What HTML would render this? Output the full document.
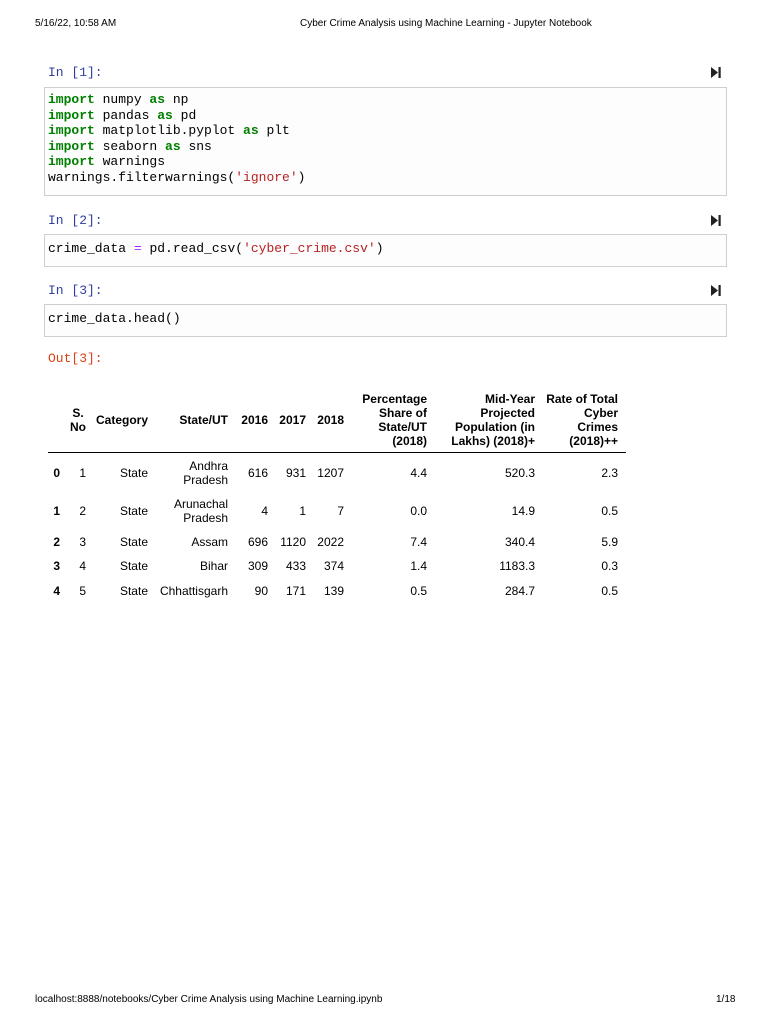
<!DOCTYPE html>
<html><head><meta charset="utf-8"><style>
body{margin:0;width:768px;height:1024px;background:#fff;position:relative;overflow:hidden;font-family:"Liberation Sans",Arial,sans-serif;color:#000}
.a{position:absolute;white-space:nowrap}
.hd{font-size:10px;top:18px}
.m{font-family:"Liberation Mono",monospace;font-size:13px;line-height:15.6px}
.pr{color:#303f9f}
.po{color:#d84315}
.k{color:#008000;font-weight:bold}
.s{color:#ba2121}
.o{color:#aa22ff}
.box{position:absolute;left:44px;width:681px;border:1px solid #cfcfcf;background:#fdfdfd}
.run{position:absolute;left:711px;width:10px;height:11px}
.t{position:absolute;white-space:nowrap;text-align:right;font-size:12px;line-height:14px;color:#000}
.b{font-weight:bold}
</style></head><body>
<div class="a hd" style="left:35px">5/16/22, 10:58 AM</div>
<div class="a hd" style="left:300px">Cyber Crime Analysis using Machine Learning - Jupyter Notebook</div>

<div class="a m pr" style="left:48px;top:65px">In [1]:</div>
<svg class="run" style="top:67px" viewBox="0 0 10 11"><path d="M0 0 L7 5.5 L0 11Z" fill="#222"/><rect x="7.5" y="0" width="2.2" height="11" fill="#222"/></svg>
<div class="box" style="top:87px;height:107px"></div>
<div class="a m" style="left:48px;top:92px">
<span class="k">import</span> numpy <span class="k">as</span> np<br>
<span class="k">import</span> pandas <span class="k">as</span> pd<br>
<span class="k">import</span> matplotlib.pyplot <span class="k">as</span> plt<br>
<span class="k">import</span> seaborn <span class="k">as</span> sns<br>
<span class="k">import</span> warnings<br>
warnings.filterwarnings(<span class="s">'ignore'</span>)</div>

<div class="a m pr" style="left:48px;top:213px">In [2]:</div>
<svg class="run" style="top:215px" viewBox="0 0 10 11"><path d="M0 0 L7 5.5 L0 11Z" fill="#222"/><rect x="7.5" y="0" width="2.2" height="11" fill="#222"/></svg>
<div class="box" style="top:234px;height:31px"></div>
<div class="a m" style="left:48px;top:241px">crime_data <span class="o">=</span> pd.read_csv(<span class="s">'cyber_crime.csv'</span>)</div>

<div class="a m pr" style="left:48px;top:283px">In [3]:</div>
<svg class="run" style="top:285px" viewBox="0 0 10 11"><path d="M0 0 L7 5.5 L0 11Z" fill="#222"/><rect x="7.5" y="0" width="2.2" height="11" fill="#222"/></svg>
<div class="box" style="top:304px;height:31px"></div>
<div class="a m" style="left:48px;top:311px">crime_data.head()</div>

<div class="a m po" style="left:48px;top:351px">Out[3]:</div>

<!-- header -->
<div class="t b" style="right:682px;top:406px;text-align:center">S.<br>No</div>
<div class="t b" style="right:620px;top:413px">Category</div>
<div class="t b" style="right:540px;top:413px">State/UT</div>
<div class="t b" style="right:500px;top:413px">2016</div>
<div class="t b" style="right:462px;top:413px">2017</div>
<div class="t b" style="right:424px;top:413px">2018</div>
<div class="t b" style="right:341px;top:392px">Percentage<br>Share of<br>State/UT<br>(2018)</div>
<div class="t b" style="right:233px;top:392px">Mid-Year<br>Projected<br>Population (in<br>Lakhs) (2018)+</div>
<div class="t b" style="right:150px;top:392px">Rate of Total<br>Cyber<br>Crimes<br>(2018)++</div>
<div class="a" style="left:48px;top:452px;width:578px;height:1px;background:#000"></div>

<!-- rows -->
<div class="t b" style="right:708px;top:466px">0</div><div class="t" style="right:682px;top:466px">1</div><div class="t" style="right:620px;top:466px">State</div><div class="t" style="right:540px;top:459px">Andhra<br>Pradesh</div><div class="t" style="right:500px;top:466px">616</div><div class="t" style="right:462px;top:466px">931</div><div class="t" style="right:424px;top:466px">1207</div><div class="t" style="right:341px;top:466px">4.4</div><div class="t" style="right:233px;top:466px">520.3</div><div class="t" style="right:150px;top:466px">2.3</div>

<div class="t b" style="right:708px;top:504px">1</div><div class="t" style="right:682px;top:504px">2</div><div class="t" style="right:620px;top:504px">State</div><div class="t" style="right:540px;top:497px">Arunachal<br>Pradesh</div><div class="t" style="right:500px;top:504px">4</div><div class="t" style="right:462px;top:504px">1</div><div class="t" style="right:424px;top:504px">7</div><div class="t" style="right:341px;top:504px">0.0</div><div class="t" style="right:233px;top:504px">14.9</div><div class="t" style="right:150px;top:504px">0.5</div>

<div class="t b" style="right:708px;top:535px">2</div><div class="t" style="right:682px;top:535px">3</div><div class="t" style="right:620px;top:535px">State</div><div class="t" style="right:540px;top:535px">Assam</div><div class="t" style="right:500px;top:535px">696</div><div class="t" style="right:462px;top:535px">1120</div><div class="t" style="right:424px;top:535px">2022</div><div class="t" style="right:341px;top:535px">7.4</div><div class="t" style="right:233px;top:535px">340.4</div><div class="t" style="right:150px;top:535px">5.9</div>

<div class="t b" style="right:708px;top:559px">3</div><div class="t" style="right:682px;top:559px">4</div><div class="t" style="right:620px;top:559px">State</div><div class="t" style="right:540px;top:559px">Bihar</div><div class="t" style="right:500px;top:559px">309</div><div class="t" style="right:462px;top:559px">433</div><div class="t" style="right:424px;top:559px">374</div><div class="t" style="right:341px;top:559px">1.4</div><div class="t" style="right:233px;top:559px">1183.3</div><div class="t" style="right:150px;top:559px">0.3</div>

<div class="t b" style="right:708px;top:584px">4</div><div class="t" style="right:682px;top:584px">5</div><div class="t" style="right:620px;top:584px">State</div><div class="t" style="right:540px;top:584px">Chhattisgarh</div><div class="t" style="right:500px;top:584px">90</div><div class="t" style="right:462px;top:584px">171</div><div class="t" style="right:424px;top:584px">139</div><div class="t" style="right:341px;top:584px">0.5</div><div class="t" style="right:233px;top:584px">284.7</div><div class="t" style="right:150px;top:584px">0.5</div>

<div class="a hd" style="left:35px;top:994px">localhost:8888/notebooks/Cyber Crime Analysis using Machine Learning.ipynb</div>
<div class="a hd" style="left:716px;top:994px">1/18</div>
</body></html>
